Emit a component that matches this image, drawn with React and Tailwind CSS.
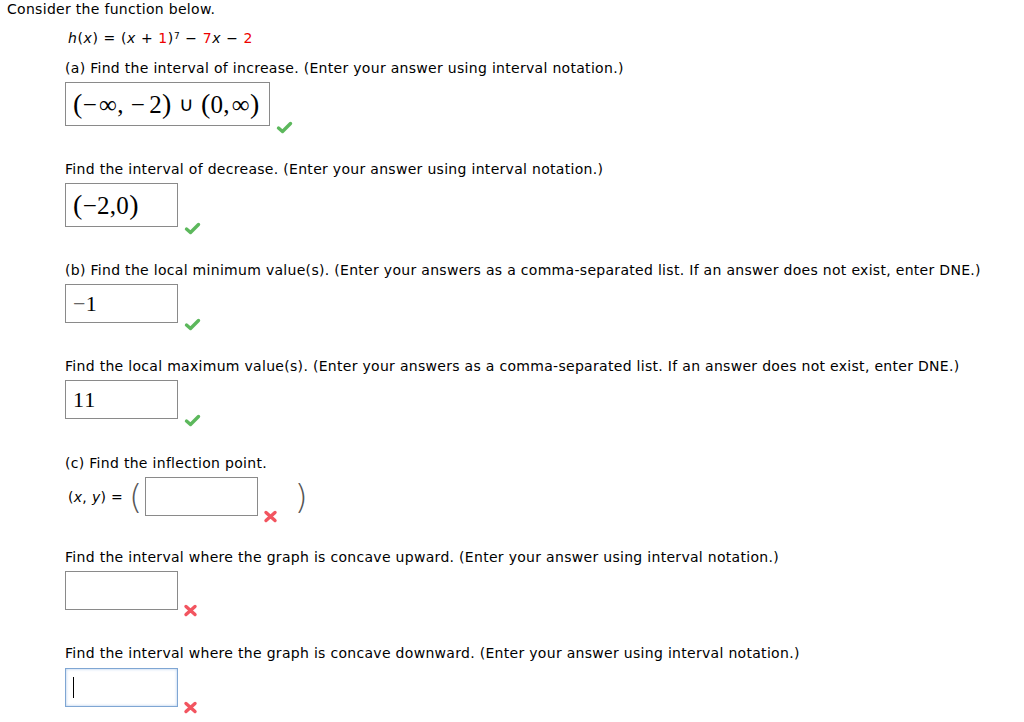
import React from "react";

function Check() {
  return (
    <svg width="17" height="13" viewBox="0 0 17 13" className="ml-[6px] mb-[-8px] shrink-0">
      <path d="M2.5 7 L6.5 10.5 L14.5 2.5" fill="none" stroke="#5cb85c" strokeWidth="3.4" strokeLinecap="round" strokeLinejoin="round" />
    </svg>
  );
}

function Cross() {
  return (
    <svg width="15" height="13" viewBox="0 0 15 13" className="ml-[5px] mb-[-7px] shrink-0">
      <path d="M3 2.5 L12 10.5 M12 2.5 L3 10.5" fill="none" stroke="#f25560" strokeWidth="3.4" strokeLinecap="round" />
    </svg>
  );
}

function Box({ w = "w-[113px]", h = "h-[39px]", focus = false, children }) {
  return (
    <div
      className={`${w} ${h} shrink-0 flex items-center pl-[7px] bg-white ${
        focus
          ? "border border-[#7fa6d3] shadow-[inset_0_0_3px_#a9c6ea]"
          : "border border-[#8a8a8a]"
      }`}
    >
      {children}
    </div>
  );
}

const math = "font-['Liberation_Serif',serif]";

export default function App() {
  return (
    <div className="w-[1024px] h-[722px] bg-white text-black text-[14px] tracking-[0.3px] leading-4 font-['DejaVu_Sans',Verdana,sans-serif] overflow-hidden">
      <p className="pl-[7px] pt-px">Consider the function below.</p>
      <div className="pl-[65px]">
        <p className="mt-[13px] pl-[3px] whitespace-pre tracking-[0.6px]">
          <i>h</i>(<i>x</i>) = (<i>x</i> + <span className="text-[#e00]">1</span>)
          <sup className="text-[9px]">7</sup>{" "}−{" "}<span className="text-[#e00]">7</span>
          <i>x</i>{" "}−{" "}<span className="text-[#e00]">2</span>
        </p>
        <p className="mt-[14px]">(a) Find the interval of increase. (Enter your answer using interval notation.)</p>
        <div className="mt-[6px] flex items-end">
          <Box w="w-[205px]" h="h-[44px]">
            <span className={`${math} text-[25px] leading-none whitespace-pre flex items-center`}>
              <span className="text-[28px]">(</span>
              <span>−</span>
              <span className="ml-[2px]">∞,</span>
              <span className="ml-[7px]">−</span>
              <span className="ml-[4px]">2</span>
              <span className="text-[28px]">)</span>
              <span className="ml-[7px] text-[20px]">∪</span>
              <span className="ml-[7px] text-[28px]">(</span>
              <span>0,</span>
              <span className="ml-[2px]">∞</span>
              <span className="text-[28px]">)</span>
            </span>
          </Box>
          <Check />
        </div>

        <p className="mt-[35px]">Find the interval of decrease. (Enter your answer using interval notation.)</p>
        <div className="mt-[6px] flex items-end">
          <Box h="h-[44px]">
            <span className={`${math} text-[25px] leading-none flex items-center`}>
              <span className="text-[28px]">(</span>
              <span>−2,0</span>
              <span className="text-[28px]">)</span>
            </span>
          </Box>
          <Check />
        </div>

        <p className="mt-[35px]">
          (b) Find the local minimum value(s). (Enter your answers as a comma-separated list. If an answer does not exist, enter DNE.)
        </p>
        <div className="mt-[6px] flex items-end">
          <Box>
            <span className={`${math} text-[22px] leading-none`}>
              <span className="text-[#666]">−</span>1
            </span>
          </Box>
          <Check />
        </div>

        <p className="mt-[35px]">
          Find the local maximum value(s). (Enter your answers as a comma-separated list. If an answer does not exist, enter DNE.)
        </p>
        <div className="mt-[6px] flex items-end">
          <Box>
            <span className={`${math} text-[22px] leading-none tracking-[1px]`}>11</span>
          </Box>
          <Check />
        </div>

        <p className="mt-[36px]">(c) Find the inflection point.</p>
        <div className="mt-[6px] flex items-end pl-[3px]">
          <div className="h-[39px] flex items-center whitespace-pre">
            (<i>x</i>, <i>y</i>) =
          </div>
          <span className="ml-[6px] self-center text-[34px] leading-none font-extralight text-[#555]">(</span>
          <div className="ml-[2px] flex items-end">
            <Box />
            <Cross />
          </div>
          <span className="ml-[17px] self-center text-[34px] leading-none font-extralight text-[#555]">)</span>
        </div>

        <p className="mt-[33px]">Find the interval where the graph is concave upward. (Enter your answer using interval notation.)</p>
        <div className="mt-[6px] flex items-end">
          <Box />
          <Cross />
        </div>

        <p className="mt-[35px]">Find the interval where the graph is concave downward. (Enter your answer using interval notation.)</p>
        <div className="mt-[7px] flex items-end">
          <Box focus>
            <div className="w-px h-[21px] bg-black" />
          </Box>
          <Cross />
        </div>
      </div>
    </div>
  );
}
